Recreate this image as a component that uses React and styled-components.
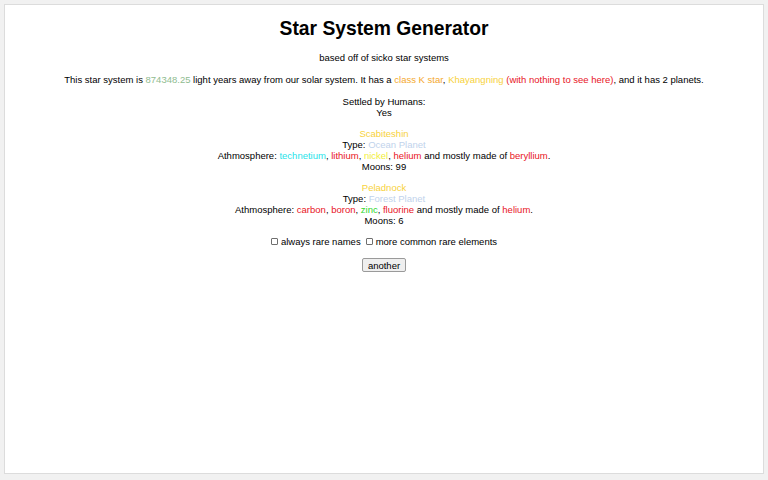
import React from "react";
import styled, { createGlobalStyle } from "styled-components";

const GlobalStyle = createGlobalStyle`
  html, body {
    margin: 0;
    padding: 0;
    background: #f1f1f1;
  }
  body {
    font-family: "Liberation Sans", Arial, sans-serif;
    color: #000;
  }
`;

const Page = styled.div`
  padding: 4px 4px 6px 4px;
  height: 480px;
  box-sizing: border-box;
`;

const Card = styled.div`
  background: #fff;
  border: 1px solid #dcdcdc;
  height: 100%;
  box-sizing: border-box;
  display: flex;
  flex-direction: column;
  align-items: center;
  text-align: center;
  font-size: 9.5px;
  line-height: 11px;
`;

const Title = styled.h1`
  font-size: 19.3px;
  line-height: 23px;
  font-weight: bold;
  margin: 12px 0 0;
`;

const Para = styled.p`
  margin: ${(p) => p.$top || 10}px 0 0;
`;

const Block = styled.div`
  margin-top: ${(p) => p.$top || 10}px;
`;

const C = styled.span`
  color: ${(p) => p.$c};
`;

const Options = styled.div`
  margin-top: 10px;
  display: flex;
  align-items: center;
  gap: 5px;
`;

const Check = styled.label`
  display: flex;
  align-items: center;
  gap: 3px;
`;

const Box = styled.input`
  appearance: none;
  width: 7px;
  height: 7px;
  margin: 0;
  border: 1px solid #6f6f6f;
  border-radius: 1px;
  background: #fff;
  box-sizing: border-box;
`;

const Button = styled.button`
  margin-top: 11px;
  font-family: "Liberation Sans", Arial, sans-serif;
  font-size: 9.5px;
  line-height: 11px;
  height: 14px;
  padding: 0 5px;
  background: #efefef;
  border: 1px solid #9a9a9a;
  border-radius: 2px;
  color: #000;
`;

const colors = {
  gold: "#f7d23c",
  blue: "#bfd3ec",
  red: "#e8141e",
  cyan: "#1fe3ea",
  yellow: "#f2ee3a",
  green: "#2ed82e",
};

const planets = [
  {
    name: "Scabiteshin",
    type: "Ocean Planet",
    atmo: [
      ["technetium", colors.cyan],
      ["lithium", colors.red],
      ["nickel", colors.yellow],
      ["helium", colors.red],
    ],
    core: ["beryllium", colors.red],
    moons: 99,
  },
  {
    name: "Peladnock",
    type: "Forest Planet",
    atmo: [
      ["carbon", colors.red],
      ["boron", colors.red],
      ["zinc", colors.green],
      ["fluorine", colors.red],
    ],
    core: ["helium", colors.red],
    moons: 6,
  },
];

function Planet({ planet, top }) {
  return (
    <Block $top={top}>
      <div>
        <C $c={colors.gold}>{planet.name}</C>
      </div>
      <div>
        Type: <C $c={colors.blue}>{planet.type}</C>
      </div>
      <div>
        Athmosphere:{" "}
        {planet.atmo.map(([el, c], i) => (
          <React.Fragment key={el}>
            <C $c={c}>{el}</C>
            {i < planet.atmo.length - 1 ? ", " : ""}
          </React.Fragment>
        ))}{" "}
        and mostly made of <C $c={planet.core[1]}>{planet.core[0]}</C>.
      </div>
      <div>Moons: {planet.moons}</div>
    </Block>
  );
}

export default function App() {
  return (
    <>
      <GlobalStyle />
      <Page>
        <Card>
          <Title>Star System Generator</Title>
          <Para $top={12}>based off of sicko star systems</Para>
          <Para $top={11}>
            This star system is <C $c="#8fbc8f">874348.25</C> light years away
            from our solar system. It has a <C $c="#f4a82e">class K star</C>,{" "}
            <C $c={colors.gold}>Khayangning</C>{" "}
            <C $c={colors.red}>(with nothing to see here)</C>, and it has 2
            planets.
          </Para>
          <Block $top={11}>
            <div>Settled by Humans:</div>
            <div>Yes</div>
          </Block>
          {planets.map((p) => (
            <Planet key={p.name} planet={p} top={10} />
          ))}
          <Options>
            <Check>
              <Box type="checkbox" />
              always rare names
            </Check>
            <Check>
              <Box type="checkbox" />
              more common rare elements
            </Check>
          </Options>
          <Button>another</Button>
        </Card>
      </Page>
    </>
  );
}
